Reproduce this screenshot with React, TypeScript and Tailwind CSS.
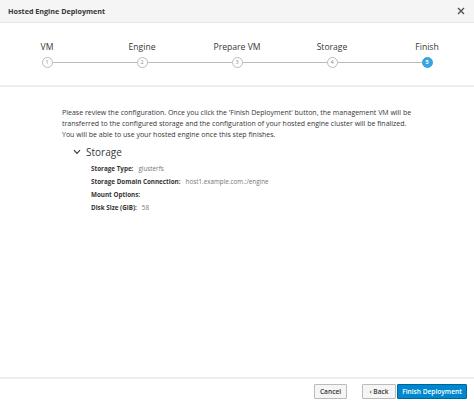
import React from "react";

const steps = ["VM", "Engine", "Prepare VM", "Storage", "Finish"];

const details: [string, string][] = [
  ["Storage Type:", "glusterfs"],
  ["Storage Domain Connection:", "host1.example.com.:/engine"],
  ["Mount Options:", ""],
  ["Disk Size (GiB):", "58"],
];

function StepCircle({ n, active }: { n: number; active: boolean }) {
  return (
    <div
      className={
        active
          ? "w-[11px] h-[11px] rounded-full bg-[#39a5dc] border border-[#39a5dc] flex items-center justify-center text-[5.5px] font-bold text-white"
          : "w-[11px] h-[11px] rounded-full bg-white border border-[#bbbbbb] flex items-center justify-center text-[5.5px] text-[#8b8d8f]"
      }
    >
      {n}
    </div>
  );
}

export default function App() {
  return (
    <div
      className="w-[474px] h-[407px] bg-white flex flex-col text-[#363636] overflow-hidden"
      style={{ fontFamily: '"Open Sans", "Noto Sans", sans-serif' }}
    >
      {/* Header */}
      <div className="h-[23px] shrink-0 bg-[#f5f5f5] border-b border-[#e6e6e6] flex items-center justify-between pl-[8px] pr-[9px]">
        <span className="text-[7.2px] font-bold text-[#363636]">Hosted Engine Deployment</span>
        <svg width="8" height="8" viewBox="0 0 8 8" className="text-[#4d5258]">
          <path d="M1 1 L7 7 M7 1 L1 7" stroke="currentColor" strokeWidth="1.4" />
        </svg>
      </div>

      {/* Stepper */}
      <div className="h-[64px] shrink-0 border-b-2 border-[#ededed] flex flex-col items-center pt-[18px]">
        <div className="flex justify-center">
          {steps.map((s) => (
            <div key={s} className="w-[95px] text-center text-[8.6px] leading-[13px] text-[#363636]">
              {s}
            </div>
          ))}
        </div>
        <div className="flex items-center justify-center mt-[3px]">
          {steps.map((s, i) => (
            <React.Fragment key={s}>
              <StepCircle n={i + 1} active={i === steps.length - 1} />
              {i < steps.length - 1 && <div className="w-[84px] h-px bg-[#bbbbbb]" />}
            </React.Fragment>
          ))}
        </div>
      </div>

      {/* Body */}
      <div className="flex-1 px-[62px] pt-[20px]">
        <p className="text-[7px] leading-[11px] text-[#363636] whitespace-nowrap">
          Please review the configuration. Once you click the 'Finish Deployment' button, the management VM will be
          <br />
          transferred to the configured storage and the configuration of your hosted engine cluster will be finalized.
          <br />
          You will be able to use your hosted engine once this step finishes.
        </p>
        <div className="flex items-center mt-[5px] ml-[11px]">
          <svg width="8" height="6" viewBox="0 0 8 6" className="text-[#363636] mr-[5px]">
            <path d="M1 1.2 L4 4.4 L7 1.2" stroke="currentColor" strokeWidth="1.1" fill="none" />
          </svg>
          <span className="text-[10px] leading-[14px]">Storage</span>
        </div>
        <div className="ml-[29px] mt-[3px] flex flex-col">
          {details.map(([k, v]) => (
            <div key={k} className="h-[13px] flex items-center text-[6.3px]">
              <span className="font-bold text-[#363636]">{k}</span>
              {v && <span className="ml-[5px] text-[#72767b]">{v}</span>}
            </div>
          ))}
        </div>
      </div>

      {/* Footer */}
      <div className="h-[30px] shrink-0 border-t-2 border-[#ededed] flex items-start justify-end pr-[7px] pt-[5px]">
        <button className="w-[33px] h-[15px] border border-[#bbbbbb] bg-[#f5f5f5] text-[6.6px] font-semibold text-[#363636] rounded-[1px]">
          Cancel
        </button>
        <button className="ml-[15px] w-[34px] h-[15px] border border-[#bbbbbb] bg-[#f5f5f5] text-[6.6px] font-semibold text-[#363636] rounded-[1px]">
          ‹ Back
        </button>
        <button className="ml-[1px] w-[70px] h-[15px] border border-[#00659c] bg-[#0088ce] text-[6.6px] font-semibold text-white rounded-[1px]">
          Finish Deployment
        </button>
      </div>
    </div>
  );
}
